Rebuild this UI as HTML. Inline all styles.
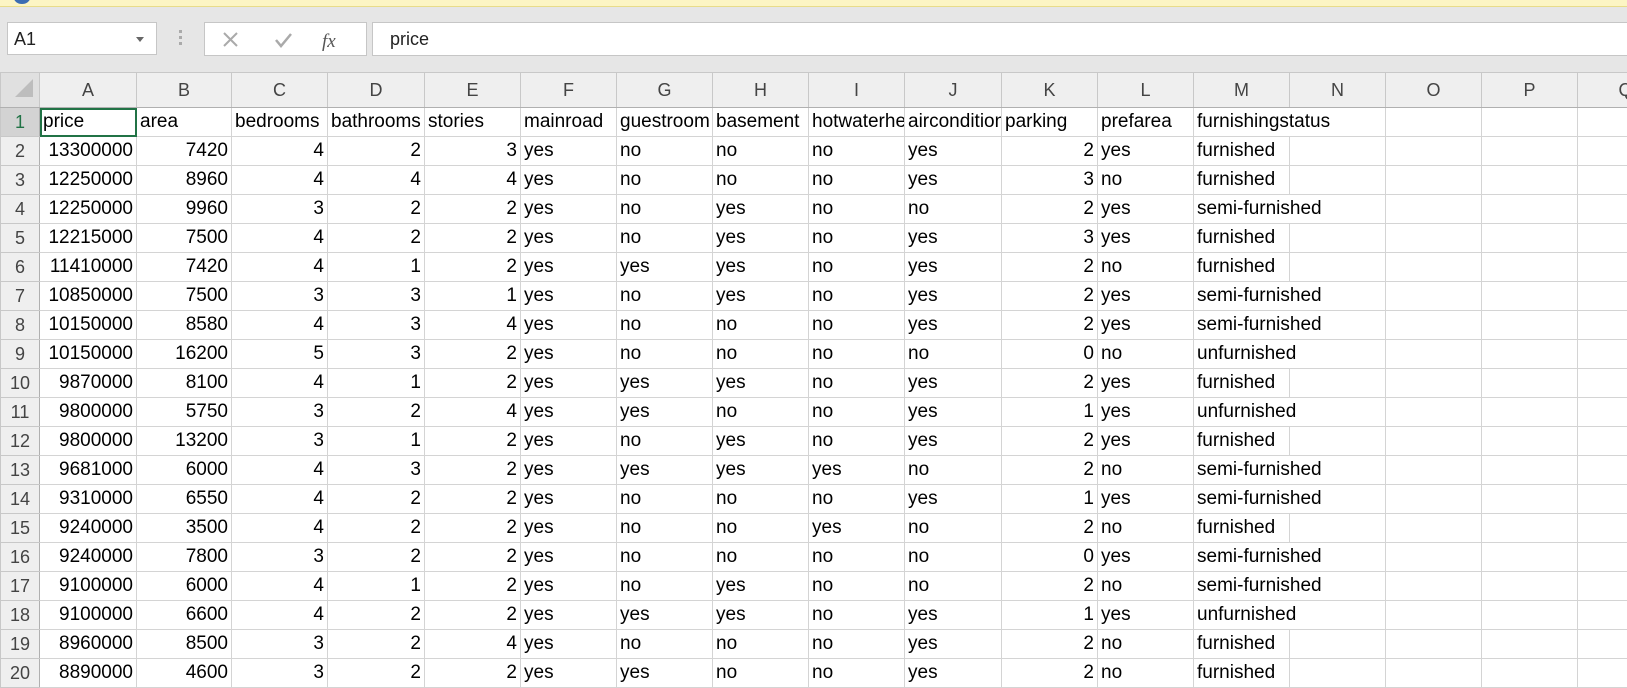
<!DOCTYPE html>
<html><head><meta charset="utf-8"><style>
body{margin:0;width:1627px;height:667px;overflow:hidden;background:#e6e6e6;font-family:"Liberation Sans",sans-serif;position:relative}
.yb{position:absolute;left:0;top:0;width:1627px;height:6px;background:#fcf5c4;border-bottom:1px solid #e8dc8a}
.nb{position:absolute;left:7px;top:22px;width:150px;height:33px;background:#fff;border:1px solid #c6c6c6;font-size:18px;color:#222;line-height:33px;box-sizing:border-box;padding-left:6px}
.nb:after{content:"";position:absolute;right:12px;top:14px;border:4px solid transparent;border-top:5px solid #666}
.dots{position:absolute;left:179px;top:30px;width:3px;height:16px;background:repeating-linear-gradient(#aaa 0 3px,transparent 3px 6px)}
.fxb{position:absolute;left:204px;top:22px;width:163px;height:34px;background:#fff;border:1px solid #c6c6c6;box-sizing:border-box}
.fin{position:absolute;left:372px;top:22px;width:1260px;height:34px;background:#fff;border:1px solid #c6c6c6;box-sizing:border-box;font-size:18px;line-height:32px;padding-left:17px;color:#222}
.grid{position:absolute;left:0;top:72px;background:#fff}
table{border-collapse:collapse;table-layout:fixed;width:1673px;font-size:19px;color:#000}
td{border:1px solid #d4d4d4;height:29px;padding:0 3px;white-space:nowrap;overflow:hidden;line-height:28px;box-sizing:border-box}
td.n{text-align:right}
tr.h td{height:28px;background:#efefef;color:#444;text-align:center;font-size:18px;border-color:#c8c8c8;border-bottom:1px solid #b0b0b0}
td.r{background:#efefef;color:#444;text-align:center;font-size:18px;border-color:#c8c8c8;border-right:1px solid #b0b0b0;padding:0}
td.sel{background:#d3d3d3;color:#217346;border-bottom:2px solid #217346}
td.rsel{background:#d3d3d3;color:#217346}
td.a1{outline:2px solid #217346;outline-offset:-2px}
</style></head><body>
<div class="yb"></div>
<div style="position:absolute;left:14px;top:-8px;width:16px;height:12px;border-radius:50%;background:#3b6db3"></div>
<div class="nb">A1</div>
<div class="dots"></div>
<div class="fxb">
<svg width="163" height="34" style="position:absolute;left:0;top:0"><path d="M19 10l13 13M32 10L19 23" stroke="#aaa" stroke-width="2" fill="none"/><path d="M71 17l5 6 10-12" stroke="#aaa" stroke-width="2.5" fill="none"/><text x="117" y="24" font-family="Liberation Serif" font-style="italic" font-size="19" fill="#555">fx</text></svg>
</div>
<div class="fin">price</div>
<div class="grid"><table>
<colgroup><col style="width:39px"><col style="width:97px"><col style="width:95px"><col style="width:96px"><col style="width:97px"><col style="width:96px"><col style="width:96px"><col style="width:96px"><col style="width:96px"><col style="width:96px"><col style="width:97px"><col style="width:96px"><col style="width:96px"><col style="width:96px"><col style="width:96px"><col style="width:96px"><col style="width:96px"><col style="width:96px"></colgroup>
<tr class="h"><td style="background:#e0e0e0"><svg width="30" height="26"><path d="M28 6L28 24L10 24Z" fill="#bdbdbd"/></svg></td><td class="sel">A</td><td>B</td><td>C</td><td>D</td><td>E</td><td>F</td><td>G</td><td>H</td><td>I</td><td>J</td><td>K</td><td>L</td><td>M</td><td>N</td><td>O</td><td>P</td><td>Q</td></tr>
<tr><td class="r rsel">1</td><td class="a1">price</td><td>area</td><td>bedrooms</td><td>bathrooms</td><td>stories</td><td>mainroad</td><td>guestroom</td><td>basement</td><td>hotwaterheating</td><td>airconditioning</td><td>parking</td><td>prefarea</td><td colspan="2">furnishingstatus</td><td></td><td></td><td></td></tr>
<tr><td class="r">2</td><td class="n">13300000</td><td class="n">7420</td><td class="n">4</td><td class="n">2</td><td class="n">3</td><td>yes</td><td>no</td><td>no</td><td>no</td><td>yes</td><td class="n">2</td><td>yes</td><td>furnished</td><td></td><td></td><td></td><td></td></tr>
<tr><td class="r">3</td><td class="n">12250000</td><td class="n">8960</td><td class="n">4</td><td class="n">4</td><td class="n">4</td><td>yes</td><td>no</td><td>no</td><td>no</td><td>yes</td><td class="n">3</td><td>no</td><td>furnished</td><td></td><td></td><td></td><td></td></tr>
<tr><td class="r">4</td><td class="n">12250000</td><td class="n">9960</td><td class="n">3</td><td class="n">2</td><td class="n">2</td><td>yes</td><td>no</td><td>yes</td><td>no</td><td>no</td><td class="n">2</td><td>yes</td><td colspan="2">semi-furnished</td><td></td><td></td><td></td></tr>
<tr><td class="r">5</td><td class="n">12215000</td><td class="n">7500</td><td class="n">4</td><td class="n">2</td><td class="n">2</td><td>yes</td><td>no</td><td>yes</td><td>no</td><td>yes</td><td class="n">3</td><td>yes</td><td>furnished</td><td></td><td></td><td></td><td></td></tr>
<tr><td class="r">6</td><td class="n">11410000</td><td class="n">7420</td><td class="n">4</td><td class="n">1</td><td class="n">2</td><td>yes</td><td>yes</td><td>yes</td><td>no</td><td>yes</td><td class="n">2</td><td>no</td><td>furnished</td><td></td><td></td><td></td><td></td></tr>
<tr><td class="r">7</td><td class="n">10850000</td><td class="n">7500</td><td class="n">3</td><td class="n">3</td><td class="n">1</td><td>yes</td><td>no</td><td>yes</td><td>no</td><td>yes</td><td class="n">2</td><td>yes</td><td colspan="2">semi-furnished</td><td></td><td></td><td></td></tr>
<tr><td class="r">8</td><td class="n">10150000</td><td class="n">8580</td><td class="n">4</td><td class="n">3</td><td class="n">4</td><td>yes</td><td>no</td><td>no</td><td>no</td><td>yes</td><td class="n">2</td><td>yes</td><td colspan="2">semi-furnished</td><td></td><td></td><td></td></tr>
<tr><td class="r">9</td><td class="n">10150000</td><td class="n">16200</td><td class="n">5</td><td class="n">3</td><td class="n">2</td><td>yes</td><td>no</td><td>no</td><td>no</td><td>no</td><td class="n">0</td><td>no</td><td colspan="2">unfurnished</td><td></td><td></td><td></td></tr>
<tr><td class="r">10</td><td class="n">9870000</td><td class="n">8100</td><td class="n">4</td><td class="n">1</td><td class="n">2</td><td>yes</td><td>yes</td><td>yes</td><td>no</td><td>yes</td><td class="n">2</td><td>yes</td><td>furnished</td><td></td><td></td><td></td><td></td></tr>
<tr><td class="r">11</td><td class="n">9800000</td><td class="n">5750</td><td class="n">3</td><td class="n">2</td><td class="n">4</td><td>yes</td><td>yes</td><td>no</td><td>no</td><td>yes</td><td class="n">1</td><td>yes</td><td colspan="2">unfurnished</td><td></td><td></td><td></td></tr>
<tr><td class="r">12</td><td class="n">9800000</td><td class="n">13200</td><td class="n">3</td><td class="n">1</td><td class="n">2</td><td>yes</td><td>no</td><td>yes</td><td>no</td><td>yes</td><td class="n">2</td><td>yes</td><td>furnished</td><td></td><td></td><td></td><td></td></tr>
<tr><td class="r">13</td><td class="n">9681000</td><td class="n">6000</td><td class="n">4</td><td class="n">3</td><td class="n">2</td><td>yes</td><td>yes</td><td>yes</td><td>yes</td><td>no</td><td class="n">2</td><td>no</td><td colspan="2">semi-furnished</td><td></td><td></td><td></td></tr>
<tr><td class="r">14</td><td class="n">9310000</td><td class="n">6550</td><td class="n">4</td><td class="n">2</td><td class="n">2</td><td>yes</td><td>no</td><td>no</td><td>no</td><td>yes</td><td class="n">1</td><td>yes</td><td colspan="2">semi-furnished</td><td></td><td></td><td></td></tr>
<tr><td class="r">15</td><td class="n">9240000</td><td class="n">3500</td><td class="n">4</td><td class="n">2</td><td class="n">2</td><td>yes</td><td>no</td><td>no</td><td>yes</td><td>no</td><td class="n">2</td><td>no</td><td>furnished</td><td></td><td></td><td></td><td></td></tr>
<tr><td class="r">16</td><td class="n">9240000</td><td class="n">7800</td><td class="n">3</td><td class="n">2</td><td class="n">2</td><td>yes</td><td>no</td><td>no</td><td>no</td><td>no</td><td class="n">0</td><td>yes</td><td colspan="2">semi-furnished</td><td></td><td></td><td></td></tr>
<tr><td class="r">17</td><td class="n">9100000</td><td class="n">6000</td><td class="n">4</td><td class="n">1</td><td class="n">2</td><td>yes</td><td>no</td><td>yes</td><td>no</td><td>no</td><td class="n">2</td><td>no</td><td colspan="2">semi-furnished</td><td></td><td></td><td></td></tr>
<tr><td class="r">18</td><td class="n">9100000</td><td class="n">6600</td><td class="n">4</td><td class="n">2</td><td class="n">2</td><td>yes</td><td>yes</td><td>yes</td><td>no</td><td>yes</td><td class="n">1</td><td>yes</td><td colspan="2">unfurnished</td><td></td><td></td><td></td></tr>
<tr><td class="r">19</td><td class="n">8960000</td><td class="n">8500</td><td class="n">3</td><td class="n">2</td><td class="n">4</td><td>yes</td><td>no</td><td>no</td><td>no</td><td>yes</td><td class="n">2</td><td>no</td><td>furnished</td><td></td><td></td><td></td><td></td></tr>
<tr><td class="r">20</td><td class="n">8890000</td><td class="n">4600</td><td class="n">3</td><td class="n">2</td><td class="n">2</td><td>yes</td><td>yes</td><td>no</td><td>no</td><td>yes</td><td class="n">2</td><td>no</td><td>furnished</td><td></td><td></td><td></td><td></td></tr>
</table></div>
</body></html>
